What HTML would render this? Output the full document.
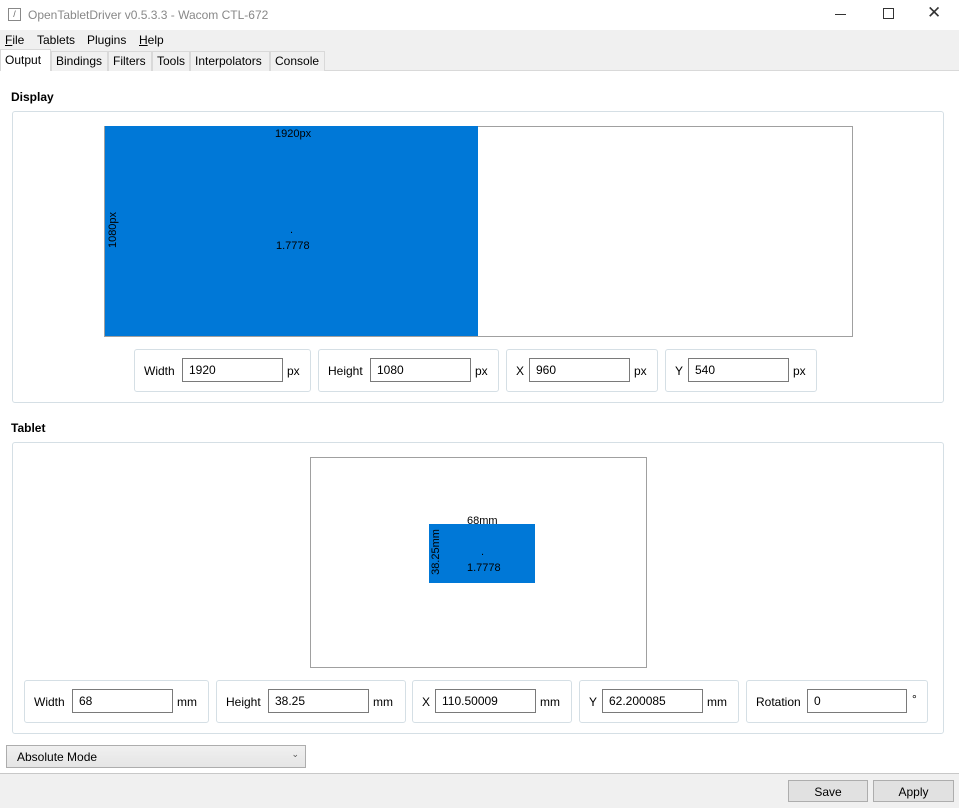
<!DOCTYPE html>
<html><head><style>
*{box-sizing:border-box;margin:0;padding:0}
body{width:959px;height:808px;position:relative;background:#fff;font-family:"Liberation Sans","DejaVu Sans",sans-serif;font-size:12px;color:#000;overflow:hidden}
.a{position:absolute}
.grp{position:absolute;border:1px solid #d5dfe5;border-radius:3px}
.fld{position:absolute;border:1px solid #d5dfe5;border-radius:3px;height:43px}
.fld span{position:absolute;top:14px}
.inp{position:absolute;top:8px;height:24px;border:1px solid #7a7a7a;background:#fff;padding:4px 0 0 6px}
.btn{position:absolute;height:22px;border:1px solid #adadad;background:#e1e1e1;text-align:center;padding-top:4px}
.tab{position:absolute;top:51px;height:20px;border:1px solid #d9d9d9;border-bottom:none;background:#f0f0f0;padding:2px 4px}
</style></head><body>
<div class="a" style="left:0;top:0;width:959px;height:30px;background:#fff"></div>
<div class="a" style="left:8px;top:8px;width:13px;height:13px;border:1px solid #888;font-size:9px;line-height:11px;text-align:center;color:#666">/</div>
<div class="a" style="left:28px;top:8px;color:#888">OpenTabletDriver v0.5.3.3 - Wacom CTL-672</div>
<div class="a" style="left:835px;top:14px;width:11px;height:1px;background:#333"></div>
<div class="a" style="left:883px;top:8px;width:11px;height:11px;border:1px solid #333"></div>
<div class="a" style="left:927px;top:3px;color:#333;font-size:17px">✕</div>
<div class="a" style="left:0;top:30px;width:959px;height:41px;background:#f0f0f0"></div>
<div class="a" style="left:5px;top:33px"><u>F</u>ile</div>
<div class="a" style="left:37px;top:33px">Tablets</div>
<div class="a" style="left:87px;top:33px">Plugins</div>
<div class="a" style="left:139px;top:33px"><u>H</u>elp</div>
<div class="a" style="left:0;top:70px;width:959px;height:1px;background:#d9d9d9"></div>
<div class="tab" style="left:0;top:49px;height:22px;background:#fff;width:51px;padding-top:3px">Output</div>
<div class="tab" style="left:51px;width:57px">Bindings</div>
<div class="tab" style="left:108px;width:44px">Filters</div>
<div class="tab" style="left:152px;width:38px">Tools</div>
<div class="tab" style="left:190px;width:80px">Interpolators</div>
<div class="tab" style="left:270px;width:55px">Console</div>

<div class="a" style="left:11px;top:90px;font-weight:bold">Display</div>
<div class="grp" style="left:12px;top:111px;width:932px;height:292px"></div>
<div class="a" style="left:104px;top:126px;width:749px;height:211px;border:1px solid #a0a0a0"></div>
<div class="a" style="left:105px;top:126px;width:373px;height:210px;background:#0078d7"></div>
<div class="a" style="left:275px;top:128px;font-size:11px">1920px</div>
<div class="a" style="left:276px;top:240px;font-size:11px">1.7778</div>
<div class="a" style="left:290px;top:224px;font-size:11px">.</div>
<div class="a" style="left:95px;top:224px;font-size:11px;transform:rotate(-90deg)">1080px</div>
<div class="fld" style="left:134px;top:349px;width:177px"><span style="left:9px">Width</span><div class="inp" style="left:47px;width:101px">1920</div><span style="left:152px">px</span></div>
<div class="fld" style="left:318px;top:349px;width:181px"><span style="left:9px">Height</span><div class="inp" style="left:51px;width:101px">1080</div><span style="left:156px">px</span></div>
<div class="fld" style="left:506px;top:349px;width:152px"><span style="left:9px">X</span><div class="inp" style="left:22px;width:101px">960</div><span style="left:127px">px</span></div>
<div class="fld" style="left:665px;top:349px;width:152px"><span style="left:9px">Y</span><div class="inp" style="left:22px;width:101px">540</div><span style="left:127px">px</span></div>

<div class="a" style="left:11px;top:421px;font-weight:bold">Tablet</div>
<div class="grp" style="left:12px;top:442px;width:932px;height:292px"></div>
<div class="a" style="left:310px;top:457px;width:337px;height:211px;border:1px solid #a0a0a0"></div>
<div class="a" style="left:429px;top:524px;width:106px;height:59px;background:#0078d7"></div>
<div class="a" style="left:467px;top:515px;font-size:11px">68mm</div>
<div class="a" style="left:467px;top:562px;font-size:11px">1.7778</div>
<div class="a" style="left:481px;top:546px;font-size:11px">.</div>
<div class="a" style="left:413px;top:546px;font-size:11px;transform:rotate(-90deg)">38.25mm</div>
<div class="fld" style="left:24px;top:680px;width:185px"><span style="left:9px">Width</span><div class="inp" style="left:47px;width:101px">68</div><span style="left:152px">mm</span></div>
<div class="fld" style="left:216px;top:680px;width:190px"><span style="left:9px">Height</span><div class="inp" style="left:51px;width:101px">38.25</div><span style="left:156px">mm</span></div>
<div class="fld" style="left:412px;top:680px;width:160px"><span style="left:9px">X</span><div class="inp" style="left:22px;width:101px">110.50009</div><span style="left:127px">mm</span></div>
<div class="fld" style="left:579px;top:680px;width:160px"><span style="left:9px">Y</span><div class="inp" style="left:22px;width:101px">62.200085</div><span style="left:127px">mm</span></div>
<div class="fld" style="left:746px;top:680px;width:182px"><span style="left:9px">Rotation</span><div class="inp" style="left:60px;width:100px">0</div><span style="left:165px;top:11px">°</span></div>

<div class="a" style="left:6px;top:745px;width:300px;height:23px;border:1px solid #adadad;background:linear-gradient(#f0f0f0,#e5e5e5);padding:4px 0 0 10px">Absolute Mode<span style="position:absolute;right:6px;top:3px;font-size:9px;color:#555">⌄</span></div>

<div class="a" style="left:0;top:773px;width:959px;height:35px;background:#f0f0f0;border-top:1px solid #c8c8c8"></div>
<div class="btn" style="left:788px;top:780px;width:80px">Save</div>
<div class="btn" style="left:873px;top:780px;width:81px">Apply</div>
</body></html>
